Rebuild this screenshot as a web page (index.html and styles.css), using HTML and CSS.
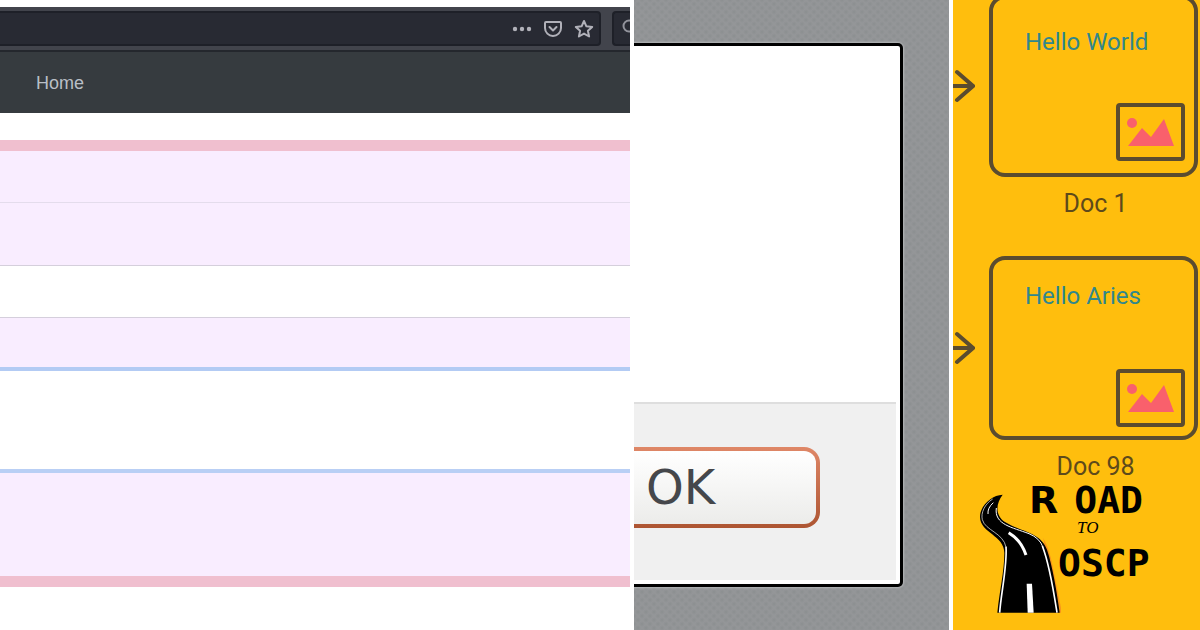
FILE: index.html
```
<!DOCTYPE html>
<html lang="en">

<head>
    <meta charset="utf-8">
    <title>Road to OSCP</title>
    <link rel="stylesheet" href="styles.css">
</head>

<body>
    <main class="collage">
        <section class="browser">
            <div class="toolbar">
                <div class="url-bar">
                    <input type="text" aria-label="Address">
                    <button type="button" aria-label="Page actions">
                        <svg width="20" height="20" viewBox="0 0 20 20" fill="#b1b1b9">
                            <circle cx="3" cy="10" r="2.2" />
                            <circle cx="10" cy="10" r="2.2" />
                            <circle cx="17" cy="10" r="2.2" />
                        </svg>
                    </button>
                    <button type="button" aria-label="Save to Pocket">
                        <svg width="20" height="20" viewBox="0 0 20 20" fill="none" stroke="#b1b1b9" stroke-width="2" stroke-linejoin="round" stroke-linecap="round">
                            <path d="M3 3h14q1 0 1 1v5a8 8 0 0 1-16 0V4q0-1 1-1z" />
                            <path d="M6.500 8l3.500 3.500L13.500 8" />
                        </svg>
                    </button>
                    <button type="button" aria-label="Bookmark">
                        <svg width="20" height="20" viewBox="0 0 20 20" fill="none" stroke="#b1b1b9" stroke-width="2" stroke-linejoin="round">
                            <path d="M10 2l2.400 5.300 5.800.6-4.300 3.900 1.200 5.700L10 14.600l-5.100 2.900 1.200-5.700L1.800 7.900l5.800-.6z" />
                        </svg>
                    </button>
                </div>
                <div class="search-bar">
                    <svg width="20" height="20" viewBox="0 0 20 20" fill="none" stroke="#92939c" stroke-width="2">
                        <circle cx="8" cy="7" r="5.500" />
                        <path d="M12 11l6 6" />
                    </svg>
                </div>
            </div>
            <nav class="navbar">
                <a href="#">Home</a>
            </nav>
            <div class="rows">
                <div class="row row-top"></div>
                <div class="row row-second"></div>
                <div class="row row-third"></div>
                <div class="row row-bottom"></div>
            </div>
        </section>

        <section class="desktop">
            <div class="dialog">
                <div class="dialog-body"></div>
                <div class="dialog-footer">
                    <button type="button" class="ok-button">OK</button>
                </div>
            </div>
        </section>

        <section class="docs">
            <div class="doc-list">
                <div class="doc doc-first">
                    <svg class="arrow" width="22" height="34" viewBox="0 0 22 34">
                        <path d="M0 17h19M4 3l16 14L4 31" />
                    </svg>
                    <div class="card">
                        <span>Hello World</span>
                        <svg class="picture" width="69" height="58" viewBox="0 0 69 58">
                            <rect x="2" y="2" width="65" height="54" rx="2" />
                            <circle cx="16" cy="20" r="5" />
                            <path d="M12 43l14-18 9 9 13-18 10 27z" />
                        </svg>
                    </div>
                </div>
                <p class="caption">Doc 1</p>
                <div class="doc">
                    <svg class="arrow" width="22" height="34" viewBox="0 0 22 34">
                        <path d="M0 17h19M4 3l16 14L4 31" />
                    </svg>
                    <div class="card">
                        <span>Hello Aries</span>
                        <svg class="picture" width="69" height="58" viewBox="0 0 69 58">
                            <rect x="2" y="2" width="65" height="54" rx="2" />
                            <circle cx="16" cy="20" r="5" />
                            <path d="M12 43l14-18 9 9 13-18 10 27z" />
                        </svg>
                    </div>
                </div>
                <p class="caption">Doc 98</p>
            </div>
            <div class="logo">
                <svg class="road" width="82" height="120" viewBox="25 28 246 360">
                    <path fill="#f7941d" d="M218 160Q238 200 245 240L274 384H250z" />
                    <path d="M96 30C62 31 27 65 28 98C29 145 101 152 101 205C101 260 86 320 80 384H267C258 320 246 245 229 195C210 142 150 142 103 112C72 92 76 55 96 30z" />
                    <g fill="none" stroke="#fff">
                        <path stroke-width="2" d="M66 43C42 58 30 85 35 105C43 137 99 145 106 188" />
                        <path stroke-width="5" d="M106 186C110 245 91 325 87 384" />
                        <path stroke-width="3" d="M77 70C70 120 125 128 175 147Q207 160 217 188" />
                        <path stroke-width="5" d="M215 184C237 240 249 320 259 384" />
                        <path stroke-width="3" d="M68 54Q50 70 52 88" />
                        <path stroke-width="9" d="M114 144Q151 166 166 211" />
                    </g>
                    <path fill="#fff" d="M168 297h16l5 87h-18z" />
                </svg>
                <div class="words">
                    <div class="word"><span class="wide">R</span>OAD</div>
                    <div class="to">TO</div>
                    <div class="word oscp">OSCP</div>
                </div>
            </div>
        </section>
    </main>
</body>

</html>
```
FILE: styles.css
```
* {
    box-sizing: border-box;
}

body {
    margin: 0;
    font-family: "Liberation Sans", Arial, sans-serif;
    background-color: #fff;
}

.collage {
    display: grid;
    grid-template-columns: 630fr 315fr 247fr;
    gap: 4px;
    min-height: 100vh;
}

section {
    min-width: 0;
    overflow: hidden;
}

svg {
    display: block;
    flex-shrink: 0;
}

/* browser */
.browser {
    padding-top: 7px;
}

.toolbar {
    display: flex;
    gap: 11px;
    padding: 4px 0;
    height: 45px;
    background-color: #42444c;
    border-bottom: 2px solid #24272d;
}

.url-bar {
    flex: 1;
    display: flex;
    align-items: center;
    gap: 11px;
    padding-right: 5px;
    background-color: #282a33;
    border: 2px solid #1e2028;
    border-left: none;
    border-radius: 0 4px 4px 0;
}

.url-bar input {
    flex: 1;
    min-width: 0;
    background: none;
    border: none;
    color: #b1b1b9;
}

.url-bar button {
    padding: 0;
    border: none;
    background: none;
}

.search-bar {
    width: 18px;
    padding: 6px 0 0 7px;
    overflow: hidden;
    background-color: #282a33;
    border: 2px solid #1e2028;
    border-right: none;
    border-radius: 4px 0 0 4px;
}

.navbar {
    display: flex;
    align-items: center;
    height: 61px;
    padding: 2px 0 0 36px;
    background-color: #363b3f;
}

.navbar a {
    color: #b9bfc6;
    font-size: 18px;
    text-decoration: none;
}

.rows {
    padding-top: 27px;
}

.row {
    background-color: #f9edff;
}

.row-top {
    height: 63px;
    border-top: 11px solid #f0bfcf;
    border-bottom: 1px solid #e4dcec;
}

.row-second {
    height: 63px;
    border-bottom: 1px solid #d5cfdc;
}

.row-third {
    height: 54px;
    margin: 51px 0 98px;
    border-top: 1px solid #d5cfdc;
    border-bottom: 4px solid #b3cbf4;
}

.row-bottom {
    height: 118px;
    border-top: 4px solid #b9cff5;
    border-bottom: 11px solid #f0bfcf;
}

/* alert box */
.desktop {
    padding: 43px 46px 43px 0;
    background-color: #949698;
    background-image: radial-gradient(#8b8e90, transparent 50%), radial-gradient(#8b8e90, transparent 50%);
    background-position: 0 0, 4px 4px;
    background-size: 8px 8px;
}

.dialog {
    display: flex;
    flex-direction: column;
    height: 100%;
    padding: 0 4px 4px 0;
    background-color: #fff;
    border: 3px solid #000;
    border-left: none;
    border-radius: 0 5px 5px 0;
    box-shadow: 0 0 2px 1px #b4b6b8;
}

.dialog-body {
    flex: 1;
}

.dialog-footer {
    height: 178px;
    padding: 43px 76px 0 0;
    background-color: #f0f0f0;
    border-top: 2px solid #dedede;
}

.ok-button {
    display: block;
    width: 100%;
    height: 81px;
    padding: 0 0 2px 12px;
    text-align: left;
    font-family: "DejaVu Sans", sans-serif;
    font-size: 48px;
    line-height: 68px;
    color: #45474b;
    background: linear-gradient(#fff, #ececea) padding-box, linear-gradient(#df8767, #ad5532) border-box;
    border: 4px solid transparent;
    border-left: none;
    border-radius: 0 16px 16px 0;
}

/* documents */
.docs {
    background-color: #ffbe0d;
    font-family: Roboto, sans-serif;
}

.doc-list {
    height: 476px;
    overflow: hidden;
}

.doc {
    display: flex;
    align-items: center;
    gap: 14px;
    padding-right: 2px;
}

.doc-first {
    margin-top: -5px;
}

.arrow {
    fill: none;
    stroke: #5b4c2f;
    stroke-width: 4;
    stroke-linecap: round;
}

.card {
    flex: 1;
    display: flex;
    flex-direction: column;
    justify-content: space-between;
    height: 184px;
    padding: 22px 9px 9px 32px;
    border: 4px solid #5b4c2f;
    border-radius: 16px;
    font-size: 24px;
    line-height: 28px;
    color: #31878c;
}

.doc-first .card {
    height: 182px;
    padding-top: 29px;
    padding-bottom: 12px;
}

.picture {
    align-self: flex-end;
    fill: #f9606c;
}

.picture rect {
    fill: none;
    stroke: #5b4c2f;
    stroke-width: 4;
}

.caption {
    margin: 0;
    padding: 13px 0 0 38px;
    height: 79px;
    text-align: center;
    font-size: 25px;
    line-height: 28px;
    color: #5e4a1b;
}

.logo {
    display: flex;
    padding: 0 0 16px 26px;
}

.road {
    margin-top: 18px;
}

.words {
    padding-top: 4px;
    margin-left: -32px;
    color: #000;
}

.word {
    font-family: "DejaVu Sans Mono", monospace;
    font-size: 38px;
    font-weight: bold;
    line-height: 40px;
    white-space: nowrap;
}

.wide {
    margin-right: 16px;
    font-family: "DejaVu Sans", sans-serif;
}

.to {
    padding: 0 0 8px 48px;
    font-family: "Liberation Serif", serif;
    font-size: 17px;
    font-style: italic;
    line-height: 15px;
}

.oscp {
    padding-left: 29px;
}
```
